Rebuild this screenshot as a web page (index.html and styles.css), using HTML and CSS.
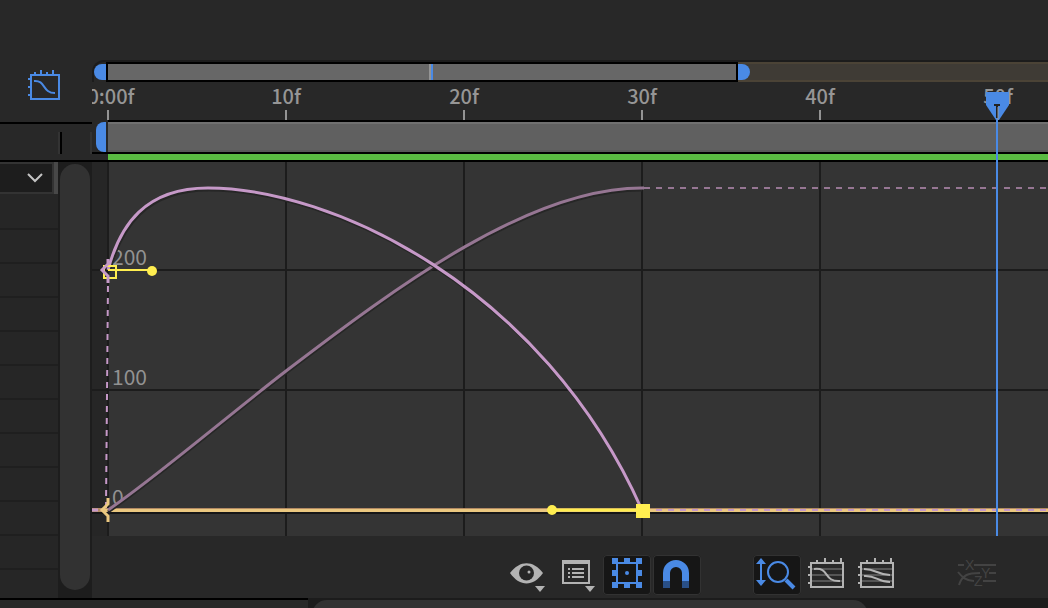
FILE: index.html
```html
<!DOCTYPE html>
<html lang="en">
<head>
<meta charset="utf-8">
<meta name="viewport" content="width=device-width, initial-scale=1">
<title>Graph Editor</title>
<link rel="stylesheet" href="styles.css">
</head>
<body>
<div class="app">
  <main class="panel">
    <aside class="layers">
      <div class="layers-top">
        <button class="graph-toggle" aria-label="Graph editor">
          <svg width="34" height="34" fill="none" stroke="#4a8ae5" stroke-width="2">
            <path d="M3 6H31V30H3ZM7 3V6M13 1V6M19 3V6M25 1V6M0 10H3M0 18H3M0 26H3"/>
            <path d="M6 12C18 11 14 24 27 24"/>
          </svg>
        </button>
      </div>
      <div class="columns"><span class="col-divider"></span><span class="col-edge"></span></div>
      <div class="layers-body">
        <div class="rows">
          <div class="select-row">
            <button class="parent-select" aria-label="Parent layer">
              <svg width="18" height="12" fill="none" stroke="#c4c4c4" stroke-width="2"><path d="M2 2L9 9L16 2"/></svg>
            </button>
          </div>
          <div class="row"></div><div class="row"></div><div class="row"></div><div class="row"></div>
          <div class="row"></div><div class="row"></div><div class="row"></div><div class="row"></div>
          <div class="row"></div><div class="row"></div><div class="row"></div>
        </div>
        <div class="v-track"><div class="v-thumb"></div></div>
      </div>
    </aside>

    <section class="timeline">
      <div class="navigator">
        <span class="nav-handle start"></span>
        <div class="nav-range"><span class="nav-mark"></span></div>
        <span class="nav-handle end"></span>
        <div class="nav-rest"></div>
      </div>
      <div class="ruler">
        <div class="tick"><span class="origin">0:00f</span></div>
        <div class="tick"><span>10f</span></div>
        <div class="tick"><span>20f</span></div>
        <div class="tick"><span>30f</span></div>
        <div class="tick"><span>40f</span></div>
        <div class="tick"><span>50f</span></div>
      </div>
      <div class="work-area"><span class="work-handle"></span><div class="work-bar"></div></div>
      <div class="cache"><div class="cache-bar"></div></div>
      <div class="graph">
        <svg class="plot" role="img" aria-label="Value and speed graph">
          <g transform="translate(-92 -162)" fill="none">
            <path d="M108 162V536M286 162V536M464 162V536M642 162V536M820 162V536M997 162V536M92 270H3000M92 390H3000M92 510H3000" stroke="#1c1c1c" stroke-width="2"/>
            <g class="axis"><text x="112" y="265">200</text><text x="112" y="385">100</text><text x="112" y="505">0</text></g>
            <path d="M92 513H3000" stroke="#161616" stroke-width="2"/>
            <path d="M92 510H3000" stroke="#b28a63" stroke-width="4"/>
            <path d="M104 510.500H3000" stroke="#ebc880" stroke-width="3"/>
            <path d="M650 510H3000" stroke="#c699c8" stroke-width="2" stroke-dasharray="6 6" stroke-dashoffset="-6"/>
            <path d="M92 510H98" stroke="#c699c8" stroke-width="3"/>
            <path d="M108 512C155 480 230 416 286 373C400 286 530 190 642 190" stroke="#262626" stroke-width="3"/>
            <path d="M108 510C155 478 230 414 286 371C400 284 530 188 642 188H644" stroke="#967693" stroke-width="3"/>
            <path d="M644 188H650" stroke="#967693" stroke-width="2"/>
            <path d="M656 188H3000" stroke="#967693" stroke-width="2" stroke-dasharray="6 6"/>
            <path d="M109 272C121 227 146 190 209 190C331 190 543 287 643 512" stroke="#262626" stroke-width="3"/>
            <path d="M108 270C120 225 145 188 208 188C330 188 542 285 642 510" stroke="#c699c8" stroke-width="3"/>
            <path d="M106 508L108 282" stroke="#c699c8" stroke-width="2" stroke-dasharray="6 6"/>
            <path d="M108 270H152" stroke="#ffee50" stroke-width="2"/>
            <path d="M104 266H116V278H104Z" stroke="#ffee50" stroke-width="2"/>
            <path d="M108 259V264L102 270L108 276V283" stroke="#c699c8" stroke-width="3"/>
            <circle cx="152" cy="271" r="5" fill="#ffee50"/>
            <path d="M108 498V504L102 510L108 516V522" stroke="#ebc880" stroke-width="3"/>
            <path d="M552 510H642" stroke="#ffee50" stroke-width="3"/>
            <circle cx="552" cy="510" r="5" fill="#ffee50"/>
            <path d="M636 504H650V518H636Z" fill="#ffee50"/>
          </g>
        </svg>
      </div>
      <div class="playhead">
        <svg width="24" height="444">
          <path d="M1 0H24V13L14 28H11L1 13Z" fill="#4a8ae5"/>
          <path d="M12 28V444" stroke="#4a8ae5" stroke-width="2"/>
          <path d="M9 13H15M12 13V26" stroke="#222" stroke-width="2"/>
          <path d="M13 15V28" stroke="#999" stroke-width="1"/>
        </svg>
      </div>
      <div class="toolbar">
        <button class="tool" aria-label="Show properties">
          <svg width="48" height="40">
            <path d="M7 18C17 5 30 5 40 18C30 32 17 32 7 18Z" fill="#b3b3b3"/>
            <circle cx="23.500" cy="18" r="7.500" fill="#262626"/><circle cx="26" cy="17" r="1.500" fill="#b3b3b3"/>
            <path d="M32 31H42L37 37Z" fill="#b3b3b3"/>
          </svg>
        </button>
        <button class="tool" aria-label="Graph type and options">
          <svg width="48" height="40" fill="none" stroke="#b3b3b3" stroke-width="2">
            <path d="M10 7H36V28H10Z"/><path d="M9 7H37" stroke-width="4"/>
            <path d="M15 14H17M19 14H31M15 18H17M19 18H31M15 22H17M19 22H31"/>
            <path d="M32 31H42L37 37Z" fill="#b3b3b3" stroke="none"/>
          </svg>
        </button>
        <button class="tool active" aria-label="Show transform box" aria-pressed="true">
          <svg width="48" height="40" fill="#4a8ae5">
            <path d="M14 8H34V28H14Z" fill="none" stroke="#4a8ae5" stroke-width="2"/>
            <path d="M9 3H15V9H9ZM21 3H27V8H21ZM33 3H39V9H33ZM9 15H14V21H9ZM34 15H39V21H34ZM9 27H15V33H9ZM21 28H27V33H21ZM33 27H39V33H33Z"/>
            <circle cx="24" cy="18" r="2"/>
          </svg>
        </button>
        <button class="tool active" aria-label="Snap" aria-pressed="true">
          <svg width="48" height="40" fill="none" stroke-width="7">
            <path d="M13.500 26V18A9.500 9.500 0 0 1 32.500 18V26" stroke="#4a8ae5"/>
            <path d="M13.500 26V33M32.500 26V33" stroke="#294f86"/>
          </svg>
        </button>
        <button class="tool active gap" aria-label="Auto-zoom graph height" aria-pressed="true">
          <svg width="48" height="40" fill="none" stroke="#4a8ae5" stroke-width="2">
            <path d="M8 7V27"/><path d="M3 9L8 3L13 9ZM3 25L8 31L13 25Z" fill="#4a8ae5" stroke="none"/>
            <circle cx="25" cy="17" r="10"/><path d="M33 25L41 33" stroke-width="4"/>
          </svg>
        </button>
        <button class="tool" aria-label="Fit selection">
          <svg width="48" height="40" fill="none" stroke="#b3b3b3" stroke-width="2">
            <path d="M8 14H40M8 20H40M8 26H40" stroke="#555"/>
            <path d="M8 8H40V32H8ZM14 5V8M22 3V8M30 5V8M38 3V8M5 12H8M5 20H8M5 28H8"/>
            <path d="M11 14C27 12 20 27 37 26"/>
          </svg>
        </button>
        <button class="tool" aria-label="Fit all graphs">
          <svg width="48" height="40" fill="none" stroke="#b3b3b3" stroke-width="2">
            <path d="M8 14H40M8 20H40M8 26H40" stroke="#555"/>
            <path d="M8 8H40V32H8ZM14 5V8M22 3V8M30 5V8M38 3V8M5 12H8M5 20H8M5 28H8"/>
            <path d="M11 14C23 14 25 20 37 20M11 21C23 20 25 27 37 27"/>
          </svg>
        </button>
        <button class="tool gap" aria-label="Separate dimensions" disabled>
          <svg width="48" height="40" fill="none" stroke="#434343" stroke-width="2">
            <path d="M5 10H11M21 10H43M36 18H43M30 26H43M5 17C9 22 13 26 21 26M6 30C9 20 15 18 27 18"/>
            <g class="axis-letter"><text x="12" y="15">X</text><text x="28" y="23">Y</text><text x="21" y="31">Z</text></g>
          </svg>
        </button>
      </div>
    </section>
  </main>
  <footer class="footer"><div class="footer-left"></div><div class="h-track"><div class="h-thumb"></div></div></footer>
</div>
</body>
</html>
```

FILE: styles.css
```css
* { box-sizing: border-box; }
body {
  margin: 0;
  background: #282828;
  color: #969696;
  font-family: "Noto Sans CJK SC", "Noto Sans", sans-serif;
  font-size: 20px;
}
button { padding: 0; border: 0; background: none; color: inherit; }
svg { display: block; }

.app { display: flex; flex-direction: column; min-height: 100vh; overflow: hidden; }
.panel { display: flex; flex: 1; }

/* Layer columns */
.layers { display: flex; flex-direction: column; width: 92px; flex: none; }
.layers-top { height: 124px; padding: 69px 0 0 28px; border-bottom: 2px solid #000; }
.columns { display: flex; justify-content: flex-end; gap: 28px; height: 38px; padding: 8px 0 6px; border-bottom: 2px solid #000; }
.col-divider { width: 4px; border-left: 2px solid #333; border-right: 2px solid #000; }
.col-edge { width: 2px; background: #333; }
.layers-body { display: flex; flex: 1; }
.rows { flex: 1; background: #262626; }
.select-row { height: 32px; margin-bottom: 2px; padding: 2px 2px 2px 0; border-right: 4px solid #484848; background: #333; }
.parent-select { display: flex; align-items: center; justify-content: flex-end; width: 100%; height: 28px; padding-right: 8px; background: #1d1d1d; }
.row { height: 34px; border-bottom: 2px solid #1f1f1f; }
.v-track { display: flex; width: 34px; padding: 2px 2px 8px; background: #1d1d1d; }
.v-thumb { flex: 1; border-radius: 15px; background: #323232; }

/* Timeline header */
.timeline { position: relative; display: flex; flex-direction: column; flex: 1; min-width: 0; overflow: hidden; }
.navigator { display: flex; height: 22px; margin-top: 60px; border-top: 2px solid #1c1c1c; border-left: 2px solid #1c1c1c; border-top-left-radius: 12px; }
.nav-handle { width: 12px; height: 16px; margin-top: 2px; background: #4a8ae5; }
.nav-handle.start { border-radius: 8px 0 0 8px; }
.nav-handle.end { position: relative; border-radius: 0 8px 8px 0; }
.nav-range { flex: 0 0 632px; height: 20px; border: 2px solid #000; background: #676767; }
.nav-mark { display: block; width: 4px; height: 16px; margin-left: 321px; border-left: 2px solid #949494; border-right: 2px solid #4a8ae5; }
.nav-rest { flex: 1; height: 20px; margin-left: -12px; border: 2px solid #4b4336; border-width: 2px 0; background: #3f3b35; }
.ruler { display: flex; height: 38px; margin-left: -73px; font-weight: 500; }
.tick { display: flex; flex-direction: column; align-items: center; flex: 0 0 178px; height: 38px; line-height: 28px; }
.tick::after { content: ""; width: 2px; height: 10px; background: #949494; }
.origin { padding-left: 6px; }
.work-area { display: flex; height: 34px; padding-left: 4px; border-bottom: 2px solid #000; }
.work-handle { width: 10px; height: 30px; margin: 2px 2px 0 0; border-radius: 8px 0 0 8px; background: #4a8ae5; }
.work-bar { flex: 1; border-top: 2px solid #000; background: #606060; box-shadow: inset 0 2px #707070, inset 0 -2px #585858; }
.cache { height: 8px; padding-left: 16px; border-bottom: 2px solid #000; }
.cache-bar { height: 6px; background: #5abb42; }

/* Graph */
.graph { height: 374px; background: linear-gradient(to right, #262626 16px, #343434 16px); }
.plot { width: 100%; height: 374px; }
.axis { fill: #929292; font-size: 21px; }
.playhead { position: absolute; left: 893px; top: 92px; }

/* Tools */
.toolbar { display: flex; flex: 1; align-items: flex-start; gap: 2px; padding: 19px 0 3px 411px; }
.tool { flex: none; width: 48px; height: 40px; border-radius: 4px; }
.tool.active { background: #161616; box-shadow: inset 0 0 0 1px #323232; }
.tool.gap { margin-left: 50px; }
.axis-letter { fill: #434343; stroke: none; font-size: 14px; }

/* Horizontal scroll bar */
.footer { display: flex; height: 10px; overflow: hidden; }
.footer-left { width: 308px; border-top: 2px solid #000; }
.h-track { flex: 1; padding: 2px 0 0 4px; background: #1c1c1c; }
.h-thumb { width: 556px; height: 30px; border-radius: 15px; background: #323232; }
```
